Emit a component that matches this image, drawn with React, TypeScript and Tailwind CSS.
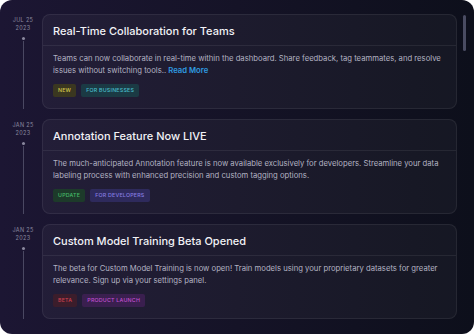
type Tag = { label: string; cls: string };

type Entry = {
  month: string;
  year: string;
  title: string;
  body: React.ReactNode;
  tags: Tag[];
};

const entries: Entry[] = [
  {
    month: "JUL 25",
    year: "2023",
    title: "Real-Time Collaboration for Teams",
    body: (
      <>
        Teams can now collaborate in real-time within the dashboard. Share feedback, tag teammates, and resolve
        issues without switching tools..{" "}
        <span className="font-semibold text-[#2f9be0]">Read More</span>
      </>
    ),
    tags: [
      { label: "NEW", cls: "bg-[#3a3720] text-[#d6c64c]" },
      { label: "FOR BUSINESSES", cls: "bg-[#1b3a44] text-[#48bccb]" },
    ],
  },
  {
    month: "JAN 25",
    year: "2023",
    title: "Annotation Feature Now LIVE",
    body: (
      <>
        The much-anticipated Annotation feature is now available exclusively for developers. Streamline your data
        labeling process with enhanced precision and custom tagging options.
      </>
    ),
    tags: [
      { label: "UPDATE", cls: "bg-[#1d3a2a] text-[#45bb68]" },
      { label: "FOR DEVELOPERS", cls: "bg-[#2e2a5c] text-[#857ce0]" },
    ],
  },
  {
    month: "JAN 25",
    year: "2023",
    title: "Custom Model Training Beta Opened",
    body: (
      <>
        The beta for Custom Model Training is now open! Train models using your proprietary datasets for greater
        relevance. Sign up via your settings panel.
      </>
    ),
    tags: [
      { label: "BETA", cls: "bg-[#3b1d2b] text-[#d0404f]" },
      { label: "PRODUCT LAUNCH", cls: "bg-[#3a1f4f] text-[#c14fd0]" },
    ],
  },
];

function TimelineItem({ entry }: { entry: Entry }) {
  return (
    <div className="flex">
      <div className="flex w-[30px] shrink-0 flex-col items-center pt-[2px]">
        <span className="text-[5.5px] leading-[8px] tracking-[0.06em] text-[#8b8aa0]">{entry.month}</span>
        <span className="text-[5.5px] leading-[8px] tracking-[0.06em] text-[#8b8aa0]">{entry.year}</span>
        <span className="mt-[5px] h-[3px] w-[3px] rounded-full bg-[#8a889e]" />
        <span className="mt-[1px] w-px flex-1 bg-[#4a4862]" />
      </div>
      <div className="ml-[4px] flex-1 rounded-[8px] border border-white/[0.07] bg-white/[0.035]">
        <div className="border-b border-white/[0.07] px-[10px] pb-[7px] pt-[9px]">
          <h2 className="text-[11px] font-medium leading-[14px] text-[#f2f2f6]">{entry.title}</h2>
        </div>
        <div className="px-[10px] pb-[11px] pt-[7px]">
          <p className="text-[7.7px] leading-[12px] text-[#b3b2c2]">{entry.body}</p>
          <div className="mt-[7px] flex gap-[5px]">
            {entry.tags.map((t) => (
              <span
                key={t.label}
                className={`flex h-[13px] items-center rounded-[2px] px-[5px] text-[5.3px] font-medium tracking-[0.04em] ${t.cls}`}
              >
                {t.label}
              </span>
            ))}
          </div>
        </div>
      </div>
    </div>
  );
}

export default function App() {
  return (
    <div className="h-[334px] w-[474px] bg-white" style={{ fontFamily: "Inter, 'Noto Sans', sans-serif" }}>
      <div className="flex h-full w-full overflow-hidden rounded-[12px] bg-gradient-to-r from-[#1c1633] via-[#151327] to-[#0d0f1b]">
        <div className="flex flex-1 flex-col gap-[10px] pb-[14px] pl-[8px] pt-[14px]">
          {entries.map((e, i) => (
            <TimelineItem key={i} entry={e} />
          ))}
        </div>
        <div className="ml-[6px] mr-[7px] flex w-[4px] flex-col pt-[15px]">
          <div className="h-[36px] w-[3px] rounded-full bg-[#4a4c62]" />
        </div>
      </div>
    </div>
  );
}
